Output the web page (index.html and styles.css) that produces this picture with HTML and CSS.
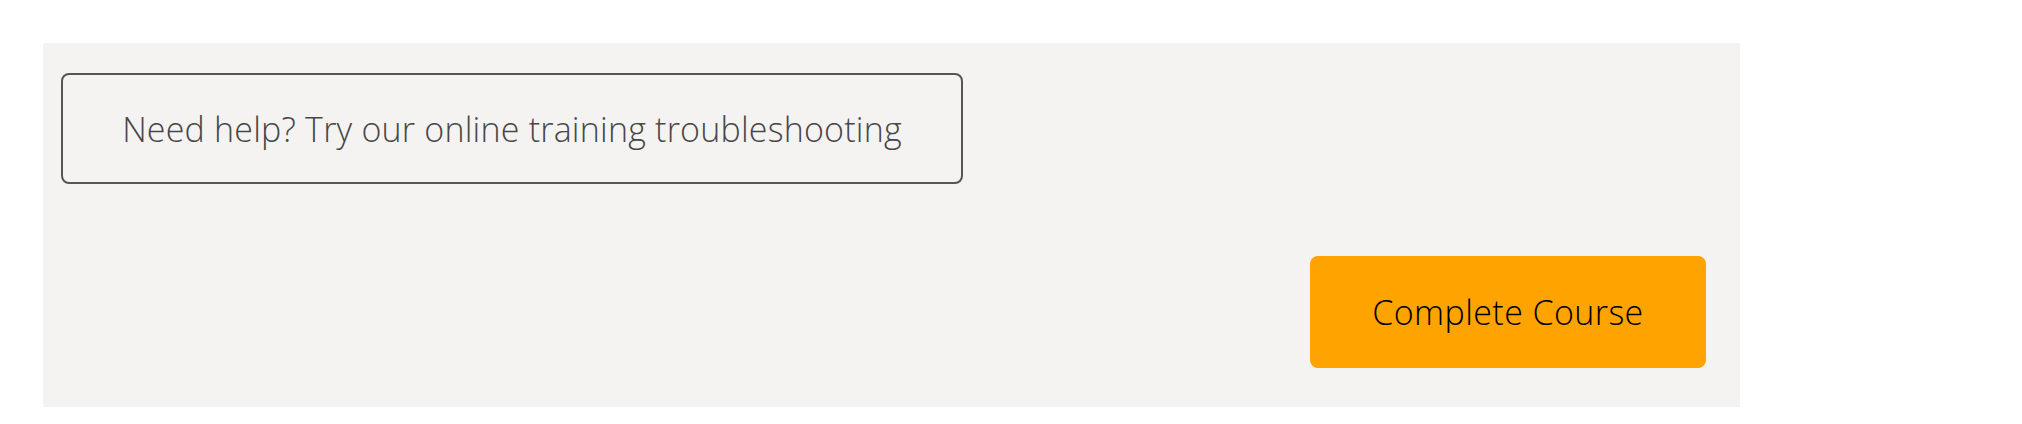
FILE: index.html
```html
<!DOCTYPE html>
<html lang="en">
<head>
<meta charset="utf-8">
<link rel="stylesheet" href="styles.css">
</head>
<body>
<div class="panel">
  <div class="help-box">Need help? Try our online training troubleshooting</div>
  <div class="actions">
    <button class="complete-btn">Complete Course</button>
  </div>
</div>
</body>
</html>
```
FILE: styles.css
```css
html, body {
  margin: 0;
  padding: 0;
  background: #ffffff;
}
body {
  font-family: "Open Sans", "Lato", sans-serif;
}
.panel {
  margin: 43px 0 0 43px;
  width: 1697px;
  height: 364px;
  box-sizing: border-box;
  background: #f4f3f2;
  padding: 30px 34px 39px 18px;
  display: flex;
  flex-direction: column;
}
.help-box {
  width: 902px;
  height: 111px;
  box-sizing: border-box;
  border: 2px solid #555555;
  border-radius: 8px;
  display: flex;
  align-items: center;
  justify-content: center;
  font-size: 34px;
  font-weight: 300;
  letter-spacing: 0.2px;
  color: #474747;
  font-variant-ligatures: none;
}
.actions {
  margin-top: auto;
  display: flex;
  justify-content: flex-end;
}
.complete-btn {
  width: 396px;
  height: 112px;
  border: none;
  border-radius: 8px;
  background: #ffa300;
  font-family: "Open Sans", "Lato", sans-serif;
  font-size: 34px;
  font-weight: 300;
  letter-spacing: 0.4px;
  color: #000000;
  padding: 0;
}
```
